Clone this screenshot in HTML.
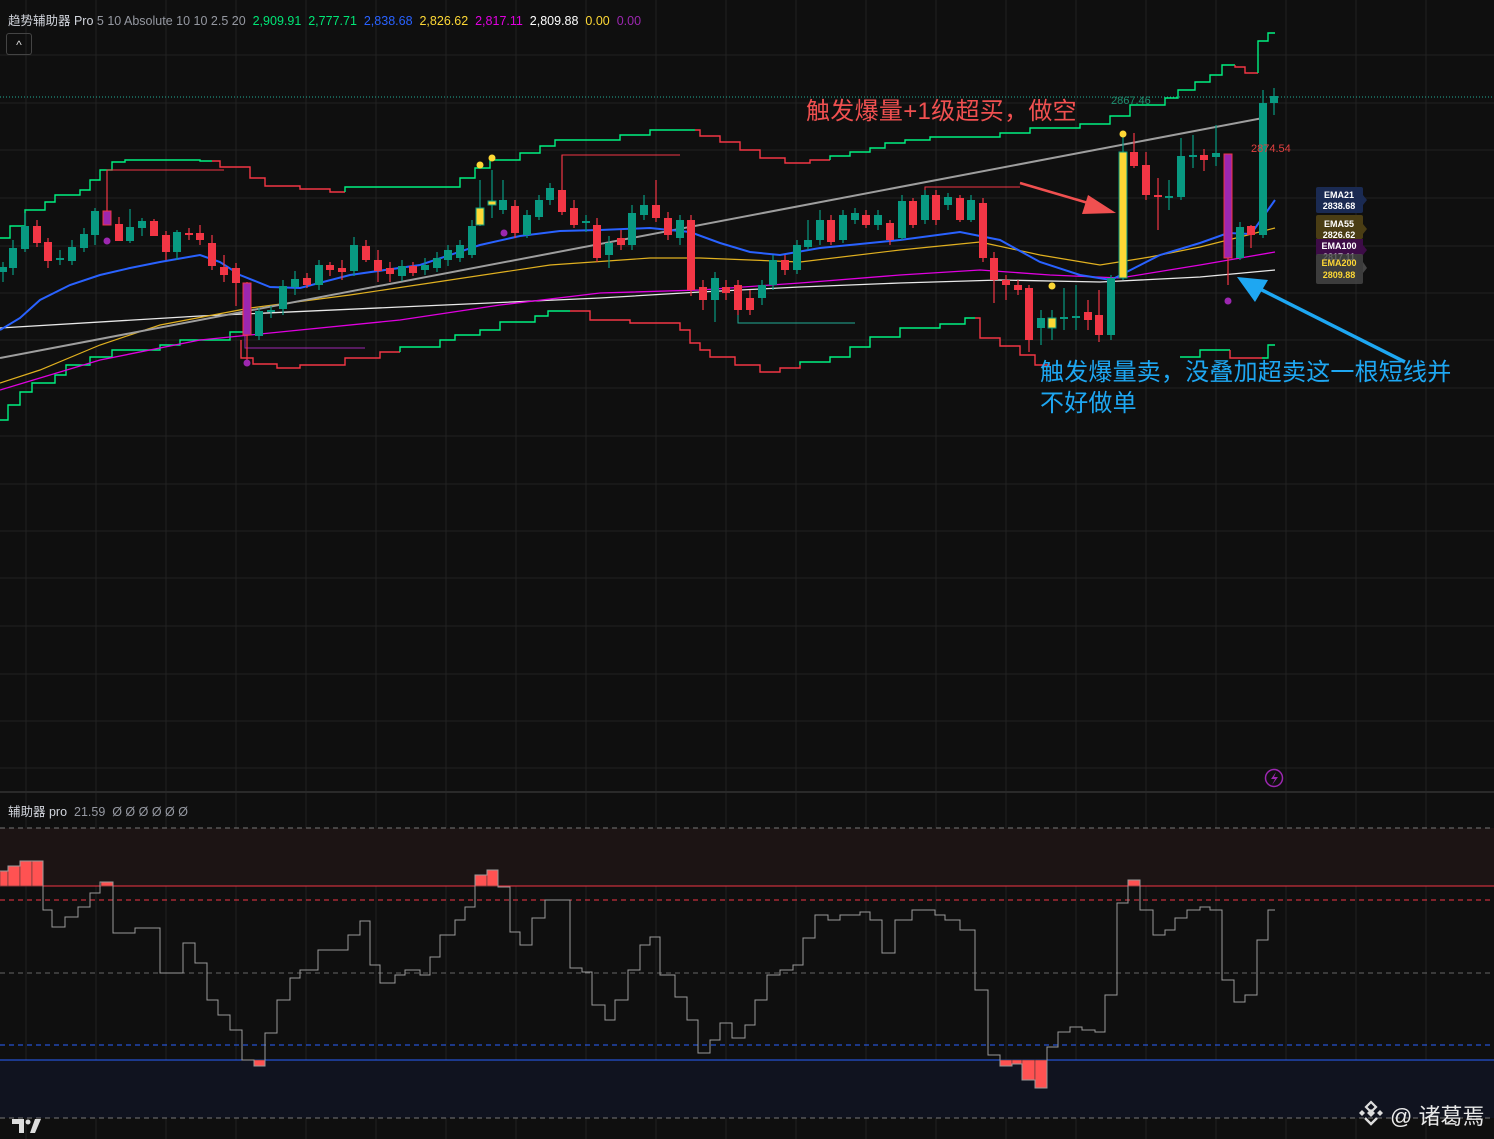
<!DOCTYPE html>
<html><head><meta charset="utf-8"><style>
html,body{margin:0;padding:0;background:#0f0f0f;width:1494px;height:1139px;overflow:hidden;font-family:"Liberation Sans","Noto Sans CJK SC",sans-serif}
#c{position:absolute;left:0;top:0}
.t{position:absolute;white-space:nowrap}
</style></head><body>
<svg id="c" width="1494" height="1139" xmlns="http://www.w3.org/2000/svg">
<g stroke="#222" stroke-width="1">
<line x1="26" y1="0" x2="26" y2="1139"/><line x1="96" y1="0" x2="96" y2="1139"/><line x1="166" y1="0" x2="166" y2="1139"/><line x1="236" y1="0" x2="236" y2="1139"/><line x1="306" y1="0" x2="306" y2="1139"/><line x1="376" y1="0" x2="376" y2="1139"/><line x1="446" y1="0" x2="446" y2="1139"/><line x1="516" y1="0" x2="516" y2="1139"/><line x1="586" y1="0" x2="586" y2="1139"/><line x1="656" y1="0" x2="656" y2="1139"/><line x1="726" y1="0" x2="726" y2="1139"/><line x1="796" y1="0" x2="796" y2="1139"/><line x1="866" y1="0" x2="866" y2="1139"/><line x1="936" y1="0" x2="936" y2="1139"/><line x1="1006" y1="0" x2="1006" y2="1139"/><line x1="1076" y1="0" x2="1076" y2="1139"/><line x1="1146" y1="0" x2="1146" y2="1139"/><line x1="1216" y1="0" x2="1216" y2="1139"/><line x1="1286" y1="0" x2="1286" y2="1139"/><line x1="1356" y1="0" x2="1356" y2="1139"/><line x1="1426" y1="0" x2="1426" y2="1139"/>
<line x1="0" y1="55" x2="1494" y2="55"/><line x1="0" y1="103" x2="1494" y2="103"/><line x1="0" y1="150" x2="1494" y2="150"/><line x1="0" y1="198" x2="1494" y2="198"/><line x1="0" y1="246" x2="1494" y2="246"/><line x1="0" y1="293" x2="1494" y2="293"/><line x1="0" y1="340" x2="1494" y2="340"/><line x1="0" y1="388" x2="1494" y2="388"/><line x1="0" y1="436" x2="1494" y2="436"/><line x1="0" y1="484" x2="1494" y2="484"/><line x1="0" y1="531" x2="1494" y2="531"/><line x1="0" y1="578" x2="1494" y2="578"/><line x1="0" y1="626" x2="1494" y2="626"/><line x1="0" y1="674" x2="1494" y2="674"/><line x1="0" y1="721" x2="1494" y2="721"/><line x1="0" y1="768" x2="1494" y2="768"/>
</g>
<line x1="0" y1="792" x2="1494" y2="792" stroke="#2a2a2a" stroke-width="2"/>
<line x1="0" y1="97" x2="1494" y2="97" stroke="#22ab94" stroke-dasharray="1 2" stroke-width="1"/>
<rect x="0" y="828" width="1494" height="58" fill="#1c1414"/>
<rect x="0" y="1060" width="1494" height="58" fill="#10131f"/>
<line x1="0" y1="828" x2="1494" y2="828" stroke="#777" stroke-dasharray="5 4"/>
<line x1="0" y1="886" x2="1494" y2="886" stroke="#f23645"/>
<line x1="0" y1="900" x2="1494" y2="900" stroke="#f23645" stroke-dasharray="5 4"/>
<line x1="0" y1="973" x2="1494" y2="973" stroke="#666" stroke-dasharray="5 4"/>
<line x1="0" y1="1045" x2="1494" y2="1045" stroke="#2962ff" stroke-dasharray="5 4"/>
<line x1="0" y1="1060" x2="1494" y2="1060" stroke="#2962ff"/>
<line x1="0" y1="1118" x2="1494" y2="1118" stroke="#777" stroke-dasharray="5 4"/>
<g fill="#ff5252" stroke="#333" stroke-width="0.5">
<rect x="0" y="871" width="8" height="15"/><rect x="8" y="866" width="12" height="20"/><rect x="20" y="861" width="12" height="25"/><rect x="32" y="861" width="11" height="25"/><rect x="101" y="882" width="12" height="4"/><rect x="475" y="875" width="12" height="11"/><rect x="487" y="870" width="11" height="16"/><rect x="1128" y="880" width="12" height="6"/>
<rect x="254" y="1060" width="11" height="6"/><rect x="1000" y="1060" width="12" height="6"/><rect x="1012" y="1060" width="10" height="4"/><rect x="1022" y="1060" width="13" height="20"/><rect x="1035" y="1060" width="12" height="28"/>
</g>
<polyline fill="none" stroke="#9a9a9a" stroke-width="1" points="0,871 8,871 8,866 20,866 20,861 43,861 43,910 52,910 52,927 65,927 65,917 78,917 78,907 90,907 90,893 100,893 100,882 113,882 113,933 135,933 135,928 160,928 160,973 183,973 183,943 195,943 195,963 207,963 207,1000 218,1000 218,1015 230,1015 230,1030 242,1030 242,1060 254,1060 254,1066 265,1066 265,1033 277,1033 277,1000 290,1000 290,978 300,978 300,970 318,970 318,950 348,950 348,935 360,935 360,921 370,921 370,965 380,965 380,983 395,983 395,975 405,975 405,970 420,970 420,975 430,975 430,957 440,957 440,935 455,935 455,920 465,920 465,907 475,907 475,875 487,875 487,870 498,870 498,887 510,887 510,932 520,932 520,945 532,945 532,918 545,918 545,900 570,900 570,968 582,968 582,972 592,972 592,1005 605,1005 605,1020 615,1020 615,1000 628,1000 628,970 640,970 640,945 650,945 650,937 660,937 660,975 675,975 675,997 687,997 687,1020 698,1020 698,1053 710,1053 710,1040 720,1040 720,1023 732,1023 732,1038 745,1038 745,1025 755,1025 755,1000 767,1000 767,975 780,975 780,970 793,970 793,965 803,965 803,938 815,938 815,915 828,915 828,920 840,920 840,915 860,915 860,912 870,912 870,920 882,920 882,953 895,953 895,920 912,920 912,910 935,910 935,915 945,915 945,920 960,920 960,930 975,930 975,990 988,990 988,1055 1000,1055 1000,1066 1012,1066 1012,1064 1022,1064 1022,1080 1035,1080 1035,1088 1047,1088 1047,1047 1058,1047 1058,1032 1070,1032 1070,1027 1082,1027 1082,1030 1095,1030 1095,1032 1105,1032 1105,995 1117,995 1117,903 1128,903 1128,880 1140,880 1140,910 1153,910 1153,935 1165,935 1165,930 1175,930 1175,918 1187,918 1187,910 1200,910 1200,907 1210,907 1210,910 1222,910 1222,980 1234,980 1234,1002 1245,1002 1245,995 1257,995 1257,940 1268,940 1268,910 1275,910"/>
<g fill="none" stroke-width="1.4">
<polyline stroke="#00f080" points="0,238 10,238 10,226 25,226 25,210 45,210 45,202 55,202 55,195 80,195 80,190 90,190 90,180 100,180 100,170 112,170 112,162 125,162 125,160 200,160 200,161 212,161"/>
<polyline stroke="#f23645" points="212,161 220,161 220,167 250,167 250,178 265,178 265,186 300,186 300,189 330,189 330,192 345,192"/>
<polyline stroke="#00f080" points="345,192 345,187 460,187 460,178 475,178 475,168 490,168 490,160 520,160 520,153 540,153 540,146 555,146 555,140 620,140 620,135 650,135 650,130 695,130"/>
<polyline stroke="#f23645" points="695,130 700,130 700,136 720,136 720,142 740,142 740,150 760,150 760,158 785,158 785,163 810,163 810,160 830,160"/>
<polyline stroke="#00f080" points="830,160 830,156 850,156 850,152 870,152 870,148 885,148 885,143 905,143 905,140 930,140 930,137 1000,137 1000,133 1030,133 1030,128 1080,128 1080,124 1110,124 1110,116 1130,116 1130,105 1165,105 1165,98 1178,98 1178,90 1195,90 1195,82 1210,82 1210,75 1222,75 1222,65 1235,65"/>
<polyline stroke="#f23645" points="1235,65 1235,67 1245,67 1245,73 1258,73"/>
<polyline stroke="#00f080" points="1258,73 1258,41 1268,41 1268,33 1275,33"/>
<polyline stroke="#00f080" points="0,420 8,420 8,405 20,405 20,392 32,392 32,383 55,383 55,375 66,375 66,365 90,365 90,357 112,357 112,350 160,350 160,345 180,345 180,340 230,340 230,332 245,332"/>
<polyline stroke="#f23645" points="241,340 241,358 253,358 253,364 277,364 277,368 300,368 300,365 345,365 345,358 380,358 380,352 400,352"/>
<polyline stroke="#00f080" points="400,352 400,347 440,347 440,340 455,340 455,335 480,335 480,330 500,330 500,322 535,322 535,316 548,316 548,311 570,311"/>
<polyline stroke="#f23645" points="570,311 590,311 590,320 630,320 630,323 680,323 680,330 690,330 690,343 700,343 700,350 710,350 710,357 735,357 735,365 760,365 760,372 780,372 780,368 800,368 800,365"/>
<polyline stroke="#00f080" points="800,365 800,362 830,362 830,357 850,357 850,347 870,347 870,337 900,337 900,328 940,328 940,324 965,324 965,318 975,318"/>
<polyline stroke="#f23645" points="975,318 980,318 980,338 1000,338 1000,346 1020,346 1020,355 1035,355 1035,365 1050,365"/>
<polyline stroke="#00f080" points="1180,357 1200,357 1200,350 1230,350"/>
<polyline stroke="#f23645" points="1230,350 1230,358 1262,358"/>
<polyline stroke="#00f080" points="1262,358 1268,358 1268,345 1275,345"/>
</g>
<polyline fill="none" stroke="#f23645" points="107,200 107,170 224,170"/>
<polyline fill="none" stroke="#f23645" points="562,190 562,155 680,155"/>
<polyline fill="none" stroke="#f23645" points="925,195 925,187 1020,187"/>
<polyline fill="none" stroke="#22ab94" points="738,310 738,323 855,323"/>
<polyline fill="none" stroke="#9c27b0" points="245,336 245,348 365,348"/>
<polyline fill="none" stroke="#e8e8e8" stroke-width="1.3" points="0,328 200,316 400,307 600,298 700,292 800,287 900,283 1000,280 1100,282 1200,277 1275,270"/>
<polyline fill="none" stroke="#e000e0" stroke-width="1.3" points="0,390 100,360 200,340 300,330 400,320 500,305 600,293 700,290 800,283 900,275 980,270 1050,275 1120,278 1200,265 1275,252"/>
<polyline fill="none" stroke="#e0b020" stroke-width="1.2" points="0,383 40,370 100,345 160,325 250,308 350,295 450,280 550,265 650,258 700,258 800,262 900,250 980,242 1040,255 1100,265 1150,257 1200,247 1240,237 1275,228"/>
<line x1="0" y1="358" x2="1263" y2="118" stroke="#9e9e9e" stroke-width="2"/>
<polyline fill="none" stroke="#2962ff" stroke-width="2" points="0,330 20,318 40,300 70,285 100,275 130,268 160,262 200,255 220,262 240,275 270,287 300,288 350,275 420,265 480,245 520,236 560,231 600,230 650,228 690,232 720,243 750,252 780,255 820,248 860,244 900,240 960,232 1000,240 1040,262 1080,275 1111,280 1160,255 1200,243 1228,233 1251,234 1275,200"/>
<g id="cs"></g>
<g fill="#9c27b0"><circle cx="107" cy="241" r="3.5"/><circle cx="247" cy="363" r="3.5"/><circle cx="504" cy="233" r="3.5"/><circle cx="1228" cy="301" r="3.5"/></g>
<g fill="#fdd835"><circle cx="480" cy="165" r="3.5"/><circle cx="492" cy="158" r="3.5"/><circle cx="1052" cy="286" r="3.5"/><circle cx="1123" cy="134" r="3.5"/></g>
<line x1="1020" y1="183" x2="1095" y2="205" stroke="#f05050" stroke-width="2.5"/>
<polygon points="1116,213 1088,195 1082,214" fill="#f05050"/>
<line x1="1405" y1="362" x2="1258" y2="288" stroke="#1ea7f2" stroke-width="3.5"/>
<polygon points="1237,277 1268,280 1255,302" fill="#1ea7f2"/>
<g font-family="Liberation Sans,sans-serif" font-size="9" font-weight="bold" text-anchor="middle">
<rect x="1316" y="187" width="47" height="26" rx="2" fill="#1a2a52"/><polygon points="1363,195 1367,200 1363,205" fill="#1a2a52"/>
<text x="1339" y="198" fill="#fff">EMA21</text><text x="1339" y="209" fill="#fff">2838.68</text>
<rect x="1316" y="215" width="47" height="24" rx="2" fill="#4a3d14"/><polygon points="1363,224 1367,229 1363,234" fill="#4a3d14"/>
<text x="1339" y="227" fill="#fff">EMA55</text><text x="1339" y="238" fill="#fff">2826.62</text>
<rect x="1316" y="239" width="47" height="16" fill="#3d0c47"/><polygon points="1363,245 1367,250 1363,255" fill="#3d0c47"/>
<text x="1339" y="249" fill="#fff">EMA100</text><text x="1339" y="260" fill="#fff">2817.11</text>
<rect x="1316" y="254" width="47" height="30" rx="2" fill="#444" opacity="0.85"/><polygon points="1363,262 1367,268 1363,273" fill="#444"/>
<text x="1339" y="266" fill="#fdd835">EMA200</text><text x="1339" y="278" fill="#fdd835">2809.88</text>
</g>
<text x="1111" y="104" font-size="11" fill="#1e8f70" font-family="Liberation Sans">2867.46</text>
<text x="1251" y="152" font-size="11" fill="#e04040" font-family="Liberation Sans">2874.54</text>
<circle cx="1274" cy="778" r="8.5" fill="none" stroke="#9c27b0" stroke-width="1.5"/>
<path d="M1276,772 L1271,779 L1275,779 L1272,785 L1278,777 L1274,777 Z" fill="#9c27b0"/>
<path d="M12,1119 h12 v14 h-5 v-9 h-7 z" fill="#ddd"/><circle cx="28" cy="1122" r="2.5" fill="#ddd"/><path d="M30,1133 L35,1119 L41,1119 L35,1133 z" fill="#ddd"/>
<g fill="#ddd" transform="translate(1371,1113)">
<polygon points="0,-11 5,-6 0,-1 -5,-6" fill="none" stroke="#ddd" stroke-width="2.2"/>
<polygon points="0,-4 4,0 0,4 -4,0"/><polygon points="-9,-3 -6,0 -9,3 -12,0"/><polygon points="9,-3 12,0 9,3 6,0"/>
<polyline points="-6,5 0,11 6,5" fill="none" stroke="#ddd" stroke-width="2.4"/>
</g>
</svg>
<div class="t" style="left:8px;top:10px;font-size:12.5px;color:#d1d4dc">趋势辅助器 Pro <span style="color:#9598a1">5 10 Absolute 10 10 2.5 20</span>&nbsp; <span style="color:#00e676">2,909.91</span>&nbsp; <span style="color:#00e676">2,777.71</span>&nbsp; <span style="color:#2962ff">2,838.68</span>&nbsp; <span style="color:#fdd835">2,826.62</span>&nbsp; <span style="color:#e000e0">2,817.11</span>&nbsp; <span style="color:#fff">2,809.88</span>&nbsp; <span style="color:#fdd835">0.00</span>&nbsp; <span style="color:#9c27b0">0.00</span></div>
<div class="t" style="left:6px;top:33px;width:24px;height:20px;border:1px solid #444;border-radius:3px;color:#ddd;font-size:12px;text-align:center;line-height:22px">^</div>
<div class="t" style="left:8px;top:801px;font-size:12.5px;color:#d1d4dc">辅助器 pro&nbsp; <span style="color:#9598a1">21.59 &nbsp;Ø Ø Ø Ø Ø Ø</span></div>
<div class="t" style="left:806px;top:91px;font-size:24px;letter-spacing:0.3px;color:#f05050">触发爆量+1级超买，做空</div>
<div class="t" style="left:1040px;top:357px;font-size:24px;letter-spacing:0.2px;line-height:31px;color:#1ea7f2">触发爆量卖，没叠加超卖这一根短线并<br>不好做单</div>
<div class="t" style="left:1390px;top:1099px;font-size:22px;color:#e8e8e8">@ 诸葛焉</div>
<script>
var d=[[3,272,267,262,282,'g'],[13,268,248,240,275,'g'],[25,249,226,213,252,'g'],[37,226,243,220,247,'r'],[48,242,261,238,268,'r'],[60,259,258,250,265,'g'],[72,261,247,240,265,'g'],[84,248,234,228,252,'g'],[95,235,211,208,245,'g'],[107,211,225,170,225,'p'],[119,224,241,217,241,'r'],[130,241,227,209,243,'g'],[142,228,221,218,236,'g'],[154,221,236,219,236,'r'],[166,235,252,231,260,'r'],[177,252,232,230,260,'g'],[189,233,234,228,240,'r'],[200,233,240,225,245,'r'],[212,243,266,235,270,'r'],[224,267,275,255,282,'r'],[236,268,283,263,306,'r'],[247,283,335,282,360,'p'],[259,336,311,308,340,'g'],[271,312,310,306,318,'g'],[283,309,286,280,315,'g'],[295,287,279,271,295,'g'],[307,278,285,273,288,'r'],[319,285,265,260,290,'g'],[330,265,270,262,276,'r'],[342,268,272,260,280,'r'],[354,271,245,237,276,'g'],[366,246,260,240,262,'r'],[378,260,271,250,282,'r'],[390,268,274,262,282,'r'],[402,276,266,260,281,'g'],[413,266,273,262,276,'r'],[425,270,265,258,275,'g'],[437,268,258,252,272,'g'],[448,260,250,245,266,'g'],[460,258,245,240,262,'g'],[472,255,226,220,258,'g'],[480,225,208,180,226,'y'],[492,205,201,170,218,'y'],[503,210,200,180,214,'g'],[515,206,233,200,238,'r'],[527,235,215,210,238,'g'],[539,217,200,195,220,'g'],[550,200,188,183,205,'g'],[562,190,212,155,215,'r'],[574,208,225,200,228,'r'],[586,222,221,215,232,'g'],[597,225,258,218,262,'r'],[609,255,243,236,268,'g'],[621,238,245,230,250,'r'],[632,245,213,205,250,'g'],[644,215,205,195,220,'g'],[656,205,218,180,222,'r'],[668,218,235,212,240,'r'],[680,238,220,215,245,'g'],[691,220,290,215,296,'r'],[703,287,300,280,310,'r'],[715,300,278,272,322,'g'],[726,287,293,280,300,'r'],[738,285,310,280,315,'r'],[750,298,310,290,315,'r'],[762,298,285,280,305,'g'],[773,285,260,255,290,'g'],[785,260,270,255,275,'r'],[797,270,245,240,274,'g'],[808,247,240,220,250,'g'],[820,240,220,210,245,'g'],[831,220,242,215,245,'r'],[843,240,215,210,243,'g'],[855,220,213,208,224,'g'],[866,215,225,210,228,'r'],[878,225,215,210,230,'g'],[890,223,240,220,245,'r'],[902,238,201,195,240,'g'],[913,201,225,198,228,'r'],[925,220,195,190,224,'g'],[936,195,220,190,225,'r'],[948,205,197,193,210,'g'],[960,198,220,195,222,'r'],[971,220,200,195,222,'g'],[983,203,258,198,262,'r'],[994,258,280,252,303,'r'],[1006,280,285,275,300,'r'],[1018,285,290,280,295,'r'],[1029,288,340,285,352,'r'],[1041,328,318,310,345,'g'],[1052,328,318,310,340,'y'],[1064,318,317,288,330,'g'],[1076,318,316,285,330,'g'],[1088,312,320,300,330,'r'],[1099,315,335,290,342,'r'],[1111,335,278,275,340,'g'],[1123,278,152,135,280,'y'],[1134,152,166,133,168,'r'],[1146,165,195,152,200,'r'],[1158,195,197,178,230,'r'],[1169,197,196,180,210,'g'],[1181,197,156,138,200,'g'],[1193,157,155,135,168,'g'],[1204,155,160,149,171,'r'],[1216,157,153,125,166,'g'],[1228,154,258,154,285,'p'],[1240,258,227,222,260,'g'],[1251,226,235,225,248,'r'],[1263,235,103,90,238,'g'],[1274,103,96,88,115,'g']];
var col={g:'#089981',r:'#f23645',y:'#fdd835',p:'#9c27b0'},s='';
d.forEach(function(c){var x=c[0],t=Math.min(c[1],c[2]),b=Math.max(c[1],c[2]),k=col[c[5]],bc=c[5]=='p'?'#f23645':(c[5]=='y'?'#089981':k);var wc=c[5]=='p'||c[5]=='y'?bc:k;
s+='<line x1="'+x+'" y1="'+c[3]+'" x2="'+x+'" y2="'+c[4]+'" stroke="'+wc+'" stroke-width="1.2"/>';
s+='<rect x="'+(x-4)+'" y="'+t+'" width="8" height="'+Math.max(2,b-t)+'" fill="'+k+'" stroke="'+bc+'" stroke-width="'+(c[5]=='p'||c[5]=='y'?1:0)+'"/>';});
document.getElementById('cs').innerHTML=s;
</script>
</body></html>
